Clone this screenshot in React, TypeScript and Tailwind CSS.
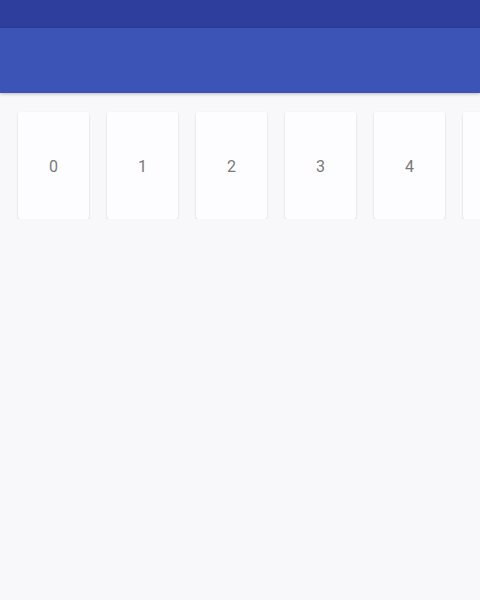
import React from 'react';

const items = [0, 1, 2, 3, 4, 5];

export default function App() {
  return (
    <div
      className="w-[480px] h-[600px] overflow-hidden bg-[#f8f7f9] flex flex-col"
      style={{ fontFamily: 'Roboto, "Noto Sans", sans-serif' }}
    >
      {/* Status bar */}
      <div className="h-[28px] bg-[#2e3e9d] shrink-0" />

      {/* App bar */}
      <div className="h-[65px] bg-[#3b54b5] shrink-0 shadow-[0_1px_3px_rgba(0,0,0,0.25)]" />

      {/* Horizontal list */}
      <div className="flex gap-[18px] pl-[18px] pt-[19px] overflow-hidden">
        {items.map((n) => (
          <div
            key={n}
            className="w-[71px] h-[107px] shrink-0 bg-[#fdfcfe] rounded-[2px] shadow-[0_1px_2px_rgba(0,0,0,0.18)] flex items-center justify-center pt-[3px] text-[16px] text-[#7a7a7a]"
          >
            {n}
          </div>
        ))}
      </div>
    </div>
  );
}
